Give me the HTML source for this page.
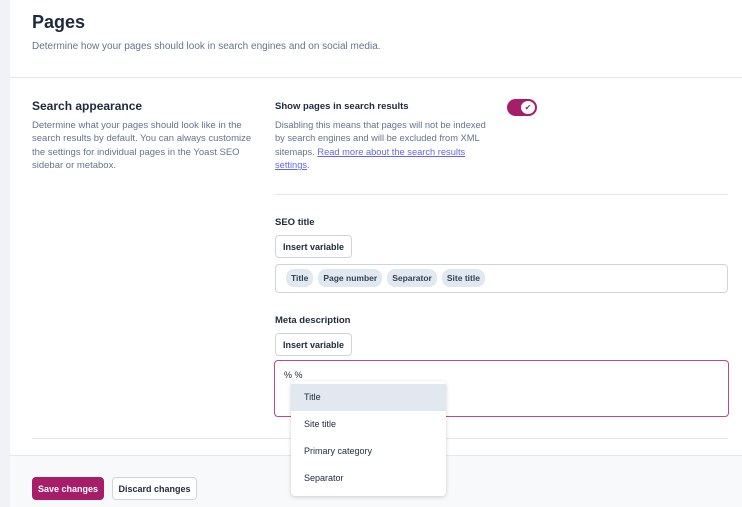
<!DOCTYPE html>
<html><head><style>
*{margin:0;padding:0;box-sizing:border-box}
body{width:742px;height:507px;overflow:hidden;background:#f0f2f5;font-family:"Liberation Sans",sans-serif;color:#1e293b;position:relative}
.panel{position:absolute;left:10px;top:0;width:732px;height:507px;background:#fff}
.foot{position:absolute;left:10px;top:455px;width:732px;height:52px;background:#f8f9fb;border-top:1px solid #e5e7eb}
.a{position:absolute;white-space:nowrap}
.muted{color:#64748b;font-size:9.5px;line-height:13.4px}
.lbl{font-size:9.5px;font-weight:bold;color:#1e293b}
.btn{position:absolute;border:1px solid #d1d5db;border-radius:4px;background:#fff;font-size:9px;font-weight:bold;display:flex;align-items:center;justify-content:center;color:#1e293b}
.chip{display:inline-block;background:#e2e8f0;border-radius:8px;font-size:8.5px;font-weight:bold;padding:2px 5px;margin-right:5px;color:#334155}
.hr{position:absolute;height:1px;background:#e5e7eb}
.dd div{height:27px;line-height:27px;padding-left:13px;font-size:9px;color:#1e293b}
</style></head><body>
<div class="panel"></div>
<div class="a" style="left:32px;top:12px;font-size:18px;font-weight:bold;color:#1e293b">Pages</div>
<div class="a muted" style="left:32px;top:40px;font-size:10px">Determine how your pages should look in search engines and on social media.</div>
<div class="hr" style="left:10px;top:77px;width:732px"></div>

<div class="a" style="left:32px;top:99px;font-size:12px;font-weight:bold">Search appearance</div>
<div class="a muted" style="left:32px;top:119px">Determine what your pages should look like in the<br>search results by default. You can always customize<br>the settings for individual pages in the Yoast SEO<br>sidebar or metabox.</div>

<div class="a lbl" style="left:275px;top:101px">Show pages in search results</div>
<div class="a muted" style="left:275px;top:119px;font-size:9.3px">Disabling this means that pages will not be indexed<br>by search engines and will be excluded from XML<br>sitemaps. <span style="color:#6366f1;text-decoration:underline">Read more about the search results</span><br><span style="color:#6366f1;text-decoration:underline">settings</span>.</div>
<div class="a" style="left:507px;top:99px;width:30px;height:17px;border-radius:9px;background:#a61e69"></div>
<div class="a" style="left:521px;top:101px;width:14px;height:13px;border-radius:50%;background:#fff;font-size:8px;color:#a61e69;text-align:center;line-height:13px">✔</div>

<div class="hr" style="left:275px;top:194px;width:453px"></div>
<div class="a lbl" style="left:275px;top:217px">SEO title</div>
<div class="btn" style="left:275px;top:235px;width:77px;height:23px">Insert variable</div>
<div class="a" style="left:275px;top:264px;width:453px;height:29px;border:1px solid #d1d5db;border-radius:4px;padding:4px 0 0 10px;line-height:14px">
<span class="chip">Title</span><span class="chip">Page number</span><span class="chip">Separator</span><span class="chip">Site title</span></div>

<div class="a lbl" style="left:275px;top:315px">Meta description</div>
<div class="btn" style="left:275px;top:333px;width:77px;height:23px">Insert variable</div>
<div class="a" style="left:274px;top:360px;width:455px;height:57px;border:1.5px solid #b84b85;border-radius:4px;padding:9px 0 0 9px;font-size:9px">% %</div>

<div class="hr" style="left:32px;top:438px;width:696px"></div>
<div class="foot"></div>
<div class="btn" style="left:32px;top:477px;width:72px;height:23px;background:#a61e69;border-color:#a61e69;color:#fff">Save changes</div>
<div class="btn" style="left:112px;top:477px;width:85px;height:23px">Discard changes</div>

<div class="a dd" style="left:291px;top:381px;width:155px;height:115px;background:#fff;border-radius:4px;box-shadow:0 1px 4px rgba(0,0,0,.18);padding-top:3px">
<div style="background:#e2e8f0">Title</div><div>Site title</div><div>Primary category</div><div>Separator</div></div>
</body></html>
